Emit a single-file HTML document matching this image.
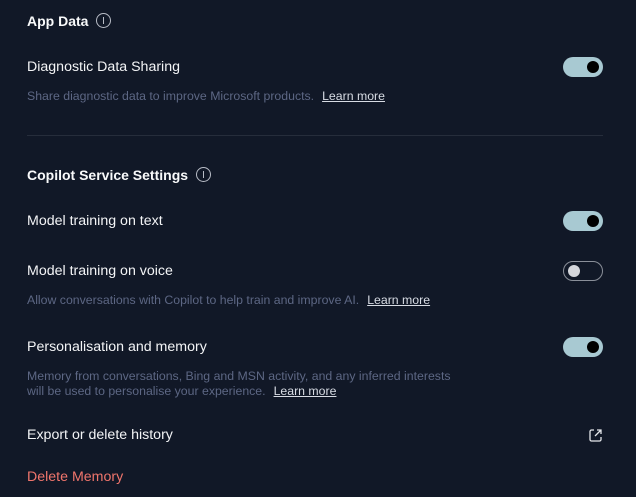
<!DOCTYPE html>
<html><head><style>
body{margin:0;width:636px;height:497px;background:#111827;font-family:"Liberation Sans",sans-serif;position:relative;overflow:hidden}
.t{position:absolute;left:27px;white-space:nowrap;line-height:1}
.h{font-weight:bold;font-size:14px;color:#f9fafb}
.l{font-size:14.2px;color:#f3f4f6}
.d{font-size:12.3px;color:#5d6784;line-height:15px}
.d a{color:#d8dce4;text-decoration:underline;margin-left:8px}
.i{display:inline-block;width:13px;height:13px;border:1px solid #b8bcc6;border-radius:50%;vertical-align:-2px;margin-left:8px;position:relative}
.i:after{content:"";position:absolute;left:6px;top:3px;width:1px;height:7px;background:#b8bcc6}
.tg{position:absolute;left:563px;width:40px;height:20px;border-radius:10px;background:#a8c9d2}
.tg:after{content:"";position:absolute;right:4px;top:4px;width:12px;height:12px;border-radius:50%;background:#000}
.off{background:none;border:1px solid #8a8f99;box-sizing:border-box}
.off:after{left:4px;right:auto;top:3px;background:#d4d6db}
</style></head><body>
<div class="t h" style="top:13px">App Data<span class="i"></span></div>
<div class="t l" style="top:60px">Diagnostic Data Sharing</div>
<div class="tg" style="top:57px"></div>
<div class="t d" style="top:89px">Share diagnostic data to improve Microsoft products.<a>Learn more</a></div>
<div style="position:absolute;left:27px;width:576px;top:135px;height:1px;background:#262d3b"></div>
<div class="t h" style="top:167px">Copilot Service Settings<span class="i"></span></div>
<div class="t l" style="top:214px">Model training on text</div>
<div class="tg" style="top:211px"></div>
<div class="t l" style="top:264px">Model training on voice</div>
<div class="tg off" style="top:261px"></div>
<div class="t d" style="top:293px">Allow conversations with Copilot to help train and improve AI.<a>Learn more</a></div>
<div class="t l" style="top:340px">Personalisation and memory</div>
<div class="tg" style="top:337px"></div>
<div class="t d" style="top:369px">Memory from conversations, Bing and MSN activity, and any inferred interests<br>will be used to personalise your experience.<a>Learn more</a></div>
<div class="t l" style="top:428px">Export or delete history</div>
<svg style="position:absolute;left:588px;top:428px" width="15" height="15" viewBox="0 0 15 15" fill="none" stroke="#e5e7eb" stroke-width="1.3"><path d="M6 2H3.5A1.5 1.5 0 0 0 2 3.5v8A1.5 1.5 0 0 0 3.5 13h8a1.5 1.5 0 0 0 1.5-1.5V9"/><path d="M9 2h4v4M13 2 7 8"/></svg>
<div class="t l" style="top:470px;color:#f0756c">Delete Memory</div>
</body></html>
